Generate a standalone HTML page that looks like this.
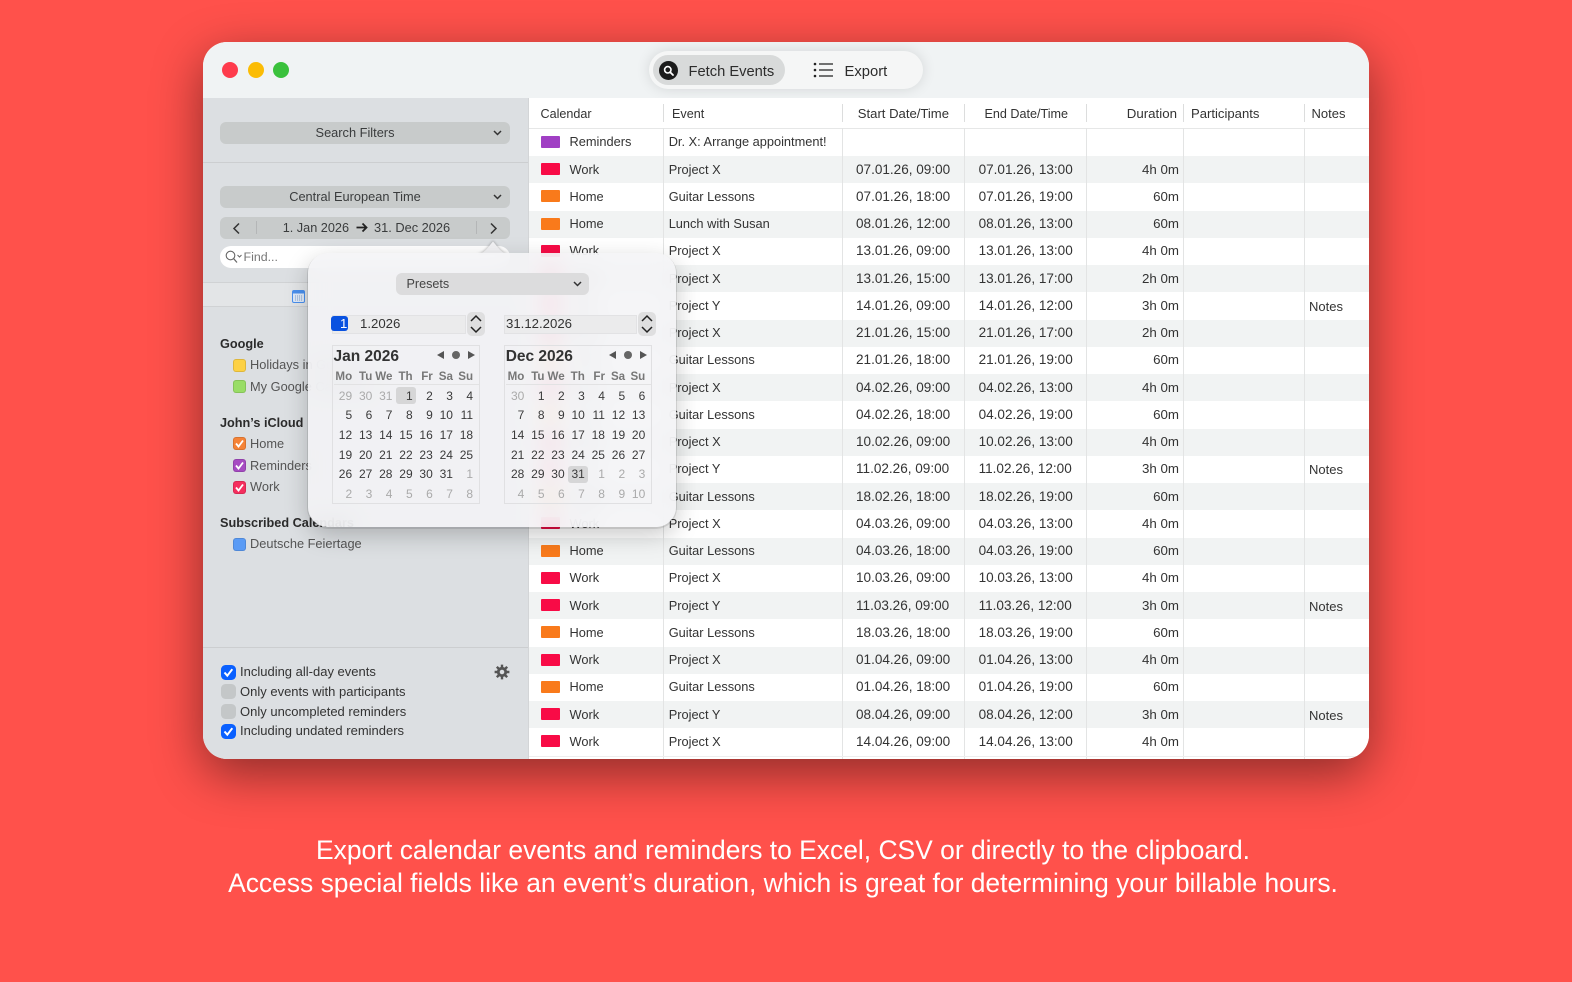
<!DOCTYPE html>
<html><head><meta charset="utf-8"><title>Calendar Export</title>
<style>
*{box-sizing:border-box;margin:0;padding:0}
html,body{width:1572px;height:982px;overflow:hidden;background:#ff514b;font-family:"Liberation Sans",sans-serif;color:#333}
.a,.a>*{position:absolute}
#win{position:absolute;left:203px;top:42px;width:1166px;height:717px;border-radius:24px;box-shadow:0 15px 50px rgba(0,0,0,.45)}
#clip{position:absolute;inset:0;border-radius:24px;overflow:hidden;background:#fff}
#in{position:absolute;left:-203px;top:-42px;width:1572px;height:982px;filter:blur(.25px)}
#in div,#in span,#in svg{position:absolute;white-space:nowrap}
.btn{background:#c8cbcb;border-radius:6px;left:220px;width:290px;height:22px}
.btn .l{left:0;width:100%;text-align:center;font-size:12.8px;line-height:21px;color:#3a3c3d;padding-right:20px}
.chev{width:9px;height:6px}
.sec{left:220px;font-size:12.7px;font-weight:bold;line-height:16px;color:#2b2b2b}
.it{left:250px;font-size:12.8px;line-height:16px;color:#555}
.sw{left:232.500px;width:13px;height:13px;border-radius:3px;border:1px solid rgba(0,0,0,.12)}
.cb{left:220.500px;width:15px;height:15px;border-radius:4.500px;background:#c4c7c8}
.cb.on{background:#0a60ff}
.lab{left:240px;font-size:13px;line-height:16px;color:#333}
.r{left:529px;width:840px;height:27.25px}
.r.g{background:#f1f3f3}
.r span{top:5.5px;font-size:12.8px;line-height:16px;color:#333}
.s{left:12px!important;top:7px!important;width:19px;height:12px;border-radius:1px}
.r .c{left:40.5px}.r .e{left:139.7px}.r .f,.r .n{font-size:13.55px}.r .f{left:327px}.r .n{left:449.6px}.r .d{right:190px;text-align:right;font-size:13.3px}.r .x{left:780px;top:6.500px;font-size:13px}
.P{background:#a03fc4}.W{background:#f80b46}.H{background:#f97a1b}
.vl{top:98px;width:1px;height:662px;background:#e3e4e4}
.h{top:106px;font-size:13.1px;line-height:16px;color:#333}
.hl{top:104px;width:1px;height:18px;background:#dcdddd}
.cal{width:148px;height:159px;border:1px solid #e0e0e2;top:345.3px}
.ct{top:1.500px;left:1px;font-size:15.5px;font-weight:bold;line-height:18px;color:#333}
.g7{display:grid;grid-template-columns:repeat(7,20.17px);position:absolute}
#in .g7 span{position:static;text-align:right;font-size:12px}
.hd{left:-.5px;top:23px;grid-auto-rows:16px;line-height:16px}
#in .hd span{font-weight:bold;font-size:11.6px;color:#777}
.dy{left:-.5px;top:40.3px;grid-auto-rows:19.67px;line-height:19.67px}
#in .dy span{color:#3a3a3a}
#in .dy .o{color:#aaa}
.ar{width:0;height:0;border-style:solid}
.dot{width:8px;height:8px;border-radius:50%;background:#666}
.step{top:312.3px;width:18px;height:24px;background:#dfdfe0;border-radius:5px}
.fld{top:315px;height:19px;background:#ebebec;border:1px solid #e2e2e4;font-size:13.2px;line-height:15.500px;color:#333}
.cap{position:absolute;left:0;width:1566px;text-align:center;color:#fff;font-size:26.43px;line-height:33px;font-family:"Liberation Sans",sans-serif;white-space:nowrap}
</style></head><body>
<div id="win"><div id="clip"><div id="in">
<!-- titlebar -->
<div style="left:203px;top:42px;width:1166px;height:56px;background:#f0f3f4"></div>
<div style="left:222px;top:62px;width:16px;height:16px;border-radius:50%;background:#fe3b4c"></div>
<div style="left:247.500px;top:62px;width:16px;height:16px;border-radius:50%;background:#fbbc05"></div>
<div style="left:272.500px;top:62px;width:16px;height:16px;border-radius:50%;background:#3ac13c"></div>
<div style="left:649.300px;top:50.700px;width:273.400px;height:38.600px;border-radius:19.3px;background:#f5f6f6;box-shadow:0 0 14px rgba(0,0,0,.12)"></div>
<div style="left:653px;top:55px;width:132px;height:30px;border-radius:15px;background:#d8dada"></div>
<div style="left:659px;top:60.500px;width:19px;height:19px;border-radius:50%;background:#1b1b1b"></div>
<svg style="left:659px;top:60.500px" width="19" height="19" viewBox="0 0 19 19"><circle cx="8.800" cy="8.800" r="3.200" fill="none" stroke="#fff" stroke-width="1.600"/><path d="M11.200 11.200L14 14" stroke="#fff" stroke-width="1.800" stroke-linecap="round"/></svg>
<div style="left:688.500px;top:62.500px;font-size:14.700px;line-height:18px;color:#2c2c2c">Fetch Events</div>
<svg style="left:813px;top:61px" width="21" height="18" viewBox="0 0 21 18"><g fill="#222"><circle cx="2" cy="3" r="1.300"/><circle cx="2" cy="9" r="1.300"/><circle cx="2" cy="15" r="1.300"/></g><path d="M6 3H20M6 9H20M6 15H20" stroke="#222" stroke-width="1.300"/></svg>
<div style="left:844.500px;top:62.500px;font-size:14.800px;line-height:18px;color:#2c2c2c">Export</div>

<!-- table -->
<div style="left:529px;top:98px;width:840px;height:662px;background:#fff"></div>
<div style="left:529px;top:127.500px;width:840px;height:1.500px;background:#e6e7e7"></div>
<div class="h" style="left:540.500px;font-size:12.600px">Calendar</div>
<div class="h" style="left:672px;font-size:12.600px">Event</div>
<div class="h" style="right:623px">Start Date/Time</div>
<div class="h" style="right:504px;font-size:12.600px">End Date/Time</div>
<div class="h" style="right:395px;font-size:13.300px">Duration</div>
<div class="h" style="left:1191px">Participants</div>
<div class="h" style="left:1311.500px;font-size:13px">Notes</div>

<div class="a" style="left:0;top:128.750px;width:0;height:0">
<div class="r" style="top:0px"><span class="s P"></span><span class="c">Reminders</span><span class="e">Dr. X: Arrange appointment!</span></div>
<div class="r g" style="top:27.250px"><span class="s W"></span><span class="c">Work</span><span class="e">Project X</span><span class="f">07.01.26, 09:00</span><span class="n">07.01.26, 13:00</span><span class="d">4h 0m</span></div>
<div class="r" style="top:54.500px"><span class="s H"></span><span class="c">Home</span><span class="e">Guitar Lessons</span><span class="f">07.01.26, 18:00</span><span class="n">07.01.26, 19:00</span><span class="d">60m</span></div>
<div class="r g" style="top:81.750px"><span class="s H"></span><span class="c">Home</span><span class="e">Lunch with Susan</span><span class="f">08.01.26, 12:00</span><span class="n">08.01.26, 13:00</span><span class="d">60m</span></div>
<div class="r" style="top:109px"><span class="s W"></span><span class="c">Work</span><span class="e">Project X</span><span class="f">13.01.26, 09:00</span><span class="n">13.01.26, 13:00</span><span class="d">4h 0m</span></div>
<div class="r g" style="top:136.250px"><span class="s W"></span><span class="c">Work</span><span class="e">Project X</span><span class="f">13.01.26, 15:00</span><span class="n">13.01.26, 17:00</span><span class="d">2h 0m</span></div>
<div class="r" style="top:163.500px"><span class="s W"></span><span class="c">Work</span><span class="e">Project Y</span><span class="f">14.01.26, 09:00</span><span class="n">14.01.26, 12:00</span><span class="d">3h 0m</span><span class="x">Notes</span></div>
<div class="r g" style="top:190.750px"><span class="s W"></span><span class="c">Work</span><span class="e">Project X</span><span class="f">21.01.26, 15:00</span><span class="n">21.01.26, 17:00</span><span class="d">2h 0m</span></div>
<div class="r" style="top:218px"><span class="s H"></span><span class="c">Home</span><span class="e">Guitar Lessons</span><span class="f">21.01.26, 18:00</span><span class="n">21.01.26, 19:00</span><span class="d">60m</span></div>
<div class="r g" style="top:245.250px"><span class="s W"></span><span class="c">Work</span><span class="e">Project X</span><span class="f">04.02.26, 09:00</span><span class="n">04.02.26, 13:00</span><span class="d">4h 0m</span></div>
<div class="r" style="top:272.500px"><span class="s H"></span><span class="c">Home</span><span class="e">Guitar Lessons</span><span class="f">04.02.26, 18:00</span><span class="n">04.02.26, 19:00</span><span class="d">60m</span></div>
<div class="r g" style="top:299.750px"><span class="s W"></span><span class="c">Work</span><span class="e">Project X</span><span class="f">10.02.26, 09:00</span><span class="n">10.02.26, 13:00</span><span class="d">4h 0m</span></div>
<div class="r" style="top:327px"><span class="s W"></span><span class="c">Work</span><span class="e">Project Y</span><span class="f">11.02.26, 09:00</span><span class="n">11.02.26, 12:00</span><span class="d">3h 0m</span><span class="x">Notes</span></div>
<div class="r g" style="top:354.250px"><span class="s H"></span><span class="c">Home</span><span class="e">Guitar Lessons</span><span class="f">18.02.26, 18:00</span><span class="n">18.02.26, 19:00</span><span class="d">60m</span></div>
<div class="r" style="top:381.500px"><span class="s W"></span><span class="c">Work</span><span class="e">Project X</span><span class="f">04.03.26, 09:00</span><span class="n">04.03.26, 13:00</span><span class="d">4h 0m</span></div>
<div class="r g" style="top:408.750px"><span class="s H"></span><span class="c">Home</span><span class="e">Guitar Lessons</span><span class="f">04.03.26, 18:00</span><span class="n">04.03.26, 19:00</span><span class="d">60m</span></div>
<div class="r" style="top:436px"><span class="s W"></span><span class="c">Work</span><span class="e">Project X</span><span class="f">10.03.26, 09:00</span><span class="n">10.03.26, 13:00</span><span class="d">4h 0m</span></div>
<div class="r g" style="top:463.250px"><span class="s W"></span><span class="c">Work</span><span class="e">Project Y</span><span class="f">11.03.26, 09:00</span><span class="n">11.03.26, 12:00</span><span class="d">3h 0m</span><span class="x">Notes</span></div>
<div class="r" style="top:490.500px"><span class="s H"></span><span class="c">Home</span><span class="e">Guitar Lessons</span><span class="f">18.03.26, 18:00</span><span class="n">18.03.26, 19:00</span><span class="d">60m</span></div>
<div class="r g" style="top:517.750px"><span class="s W"></span><span class="c">Work</span><span class="e">Project X</span><span class="f">01.04.26, 09:00</span><span class="n">01.04.26, 13:00</span><span class="d">4h 0m</span></div>
<div class="r" style="top:545px"><span class="s H"></span><span class="c">Home</span><span class="e">Guitar Lessons</span><span class="f">01.04.26, 18:00</span><span class="n">01.04.26, 19:00</span><span class="d">60m</span></div>
<div class="r g" style="top:572.250px"><span class="s W"></span><span class="c">Work</span><span class="e">Project Y</span><span class="f">08.04.26, 09:00</span><span class="n">08.04.26, 12:00</span><span class="d">3h 0m</span><span class="x">Notes</span></div>
<div class="r" style="top:599.500px"><span class="s W"></span><span class="c">Work</span><span class="e">Project X</span><span class="f">14.04.26, 09:00</span><span class="n">14.04.26, 13:00</span><span class="d">4h 0m</span></div>
</div>
<div class="vl" style="left:663px;top:128px"></div><div class="vl" style="left:842px;top:128px"></div><div class="vl" style="left:964px;top:128px"></div><div class="vl" style="left:1086px;top:128px"></div><div class="vl" style="left:1183px;top:128px"></div><div class="vl" style="left:1304px;top:128px"></div>
<div class="hl" style="left:663px"></div><div class="hl" style="left:842px"></div><div class="hl" style="left:964px"></div><div class="hl" style="left:1086px"></div><div class="hl" style="left:1183px"></div><div class="hl" style="left:1304px"></div>
<div style="left:529px;top:756px;width:840px;height:1px;background:#eee"></div>

<!-- sidebar -->
<div style="left:203px;top:98px;width:326px;height:662px;background:#dcdfe2;border-right:1.500px solid #d3d5d7"></div>
<div class="btn" style="top:122px"><span class="l">Search Filters</span><svg class="chev" style="left:273px;top:8px" viewBox="0 0 9 6"><path d="M1 1l3.500 3.500L8 1" fill="none" stroke="#333" stroke-width="1.500"/></svg></div>
<div style="left:203px;top:161.500px;width:325px;height:1.500px;background:#ccced0"></div>
<div class="btn" style="top:186px"><span class="l">Central European Time</span><svg class="chev" style="left:273px;top:8px" viewBox="0 0 9 6"><path d="M1 1l3.500 3.500L8 1" fill="none" stroke="#333" stroke-width="1.500"/></svg></div>
<div class="btn" style="top:216.700px;background:#c8cbcb">
<span style="left:62.700px;top:0;font-size:12.700px;line-height:22px;color:#3a3c3d">1. Jan 2026</span>
<span style="left:154px;top:0;font-size:12.800px;line-height:22px;color:#3a3c3d">31. Dec 2026</span>
<svg style="left:12px;top:5px" width="9" height="13" viewBox="0 0 9 13"><path d="M7 1.500L2 6.500l5 5" fill="none" stroke="#333" stroke-width="1.500"/></svg>
<svg style="left:269px;top:5px" width="9" height="13" viewBox="0 0 9 13"><path d="M2 1.500l5 5-5 5" fill="none" stroke="#333" stroke-width="1.500"/></svg>
<div style="left:36px;top:4px;width:1px;height:13px;background:#b4b6b7"></div><div style="left:256px;top:4px;width:1px;height:13px;background:#b4b6b7"></div>
<svg style="left:136px;top:5px" width="12" height="11" viewBox="0 0 12 11"><path d="M0.500 5.500H10M6.500 1.500l4 4-4 4" fill="none" stroke="#222" stroke-width="1.800"/></svg></div>
<div style="left:220px;top:246px;width:290px;height:22px;border-radius:11px;background:#fff"></div>
<svg style="left:225px;top:250px" width="17" height="14" viewBox="0 0 17 14"><circle cx="5.500" cy="5.500" r="4.300" fill="none" stroke="#666" stroke-width="1.100"/><path d="M8.700 8.700L12 12.500" stroke="#666" stroke-width="1.200"/><path d="M12.500 5l2 2 2-2" fill="none" stroke="#666" stroke-width="1"/></svg>
<div style="left:243.500px;top:249px;font-size:12.400px;line-height:16px;color:#777">Find...</div>
<div style="left:203px;top:282px;width:325px;height:25px;background:#e3e5e7;border-top:1.500px solid #d0d2d4;border-bottom:1.500px solid #d0d2d4"></div>
<svg style="left:291.500px;top:290px" width="13" height="13" viewBox="0 0 13 13"><rect x=".5" y=".5" width="12" height="12" rx="1.500" fill="#dfeafa" stroke="#4a90ee"/><rect x=".5" y=".5" width="12" height="3" fill="#4a90ee"/><path d="M3 6h7M3 8h7M3 10h7" stroke="#7ea0c8" stroke-dasharray="1 1"/></svg>

<div class="sec" style="top:336px">Google</div>
<div class="sw" style="top:358.500px;background:#fdd144"></div><div class="it" style="top:357px">Holidays in Germany</div>
<div class="sw" style="top:380px;background:#99dd66"></div><div class="it" style="top:379px">My Google Calendar</div>
<div class="sec" style="top:414.500px">John’s iCloud</div>
<div class="sw" style="top:437px;background:#f58337"></div><div class="it" style="top:435.500px">Home</div>
<div class="sw" style="top:459px;background:#a64bc2"></div><div class="it" style="top:457.500px">Reminders</div>
<div class="sw" style="top:480.500px;background:#f52e5e"></div><div class="it" style="top:479px">Work</div>
<svg style="left:232.500px;top:437px" width="13" height="13" viewBox="0 0 13 13"><path d="M3 6.500l2.500 3L10 3.500" fill="none" stroke="#fff" stroke-width="1.800"/></svg>
<svg style="left:232.500px;top:459px" width="13" height="13" viewBox="0 0 13 13"><path d="M3 6.500l2.500 3L10 3.500" fill="none" stroke="#fff" stroke-width="1.800"/></svg>
<svg style="left:232.500px;top:480.500px" width="13" height="13" viewBox="0 0 13 13"><path d="M3 6.500l2.500 3L10 3.500" fill="none" stroke="#fff" stroke-width="1.800"/></svg>
<div class="sec" style="top:515px">Subscribed Calendars</div>
<div class="sw" style="top:537.500px;background:#5a9bf5"></div><div class="it" style="top:536px">Deutsche Feiertage</div>

<div style="left:203px;top:646.500px;width:325px;height:1.500px;background:#ccced0"></div>
<div class="cb on" style="top:664.500px"></div><div class="lab" style="top:664px">Including all-day events</div>
<div class="cb" style="top:684px"></div><div class="lab" style="top:684px">Only events with participants</div>
<div class="cb" style="top:704px"></div><div class="lab" style="top:704px">Only uncompleted reminders</div>
<div class="cb on" style="top:723.500px"></div><div class="lab" style="top:723px">Including undated reminders</div>
<svg style="left:220.500px;top:664.500px" width="15" height="15" viewBox="0 0 15 15"><path d="M3.500 7.500l2.800 3.200 5-6.500" fill="none" stroke="#fff" stroke-width="2"/></svg>
<svg style="left:220.500px;top:723.500px" width="15" height="15" viewBox="0 0 15 15"><path d="M3.500 7.500l2.800 3.200 5-6.500" fill="none" stroke="#fff" stroke-width="2"/></svg>
<svg style="left:494px;top:664px" width="16" height="16" viewBox="0 0 16 16"><circle cx="8" cy="8" r="3.700" fill="none" stroke="#555" stroke-width="2.800"/><path d="M8 .6v3M8 12.400v3M.6 8h3M12.400 8h3M2.800 2.800l2.100 2.100M11.100 11.100l2.100 2.100M13.200 2.800l-2.100 2.100M4.900 11.100l-2.100 2.100" stroke="#555" stroke-width="2.400"/></svg>

<!-- popover -->
<svg style="left:476px;top:240px;z-index:1;filter:drop-shadow(0 -1px 1px rgba(0,0,0,.22))" width="34" height="15" viewBox="0 0 34 15"><path d="M0 14.500C8 14.500 12 7 17 1.500 22 7 26 14.500 34 14.500z" fill="#f2f2f4"/></svg>
<div style="left:308.300px;top:253.300px;width:368px;height:273.500px;border-radius:20px;background:rgba(244,244,246,.87);backdrop-filter:blur(10px);box-shadow:0 1px 0 1px rgba(0,0,0,.1),0 8px 24px rgba(0,0,0,.22);z-index:2"></div>
<div style="left:0;top:0;z-index:4;width:0;height:0">
<div style="left:395.700px;top:273px;width:193.600px;height:21.700px;border-radius:6px;background:#dcdcdd"></div>
<div style="left:406.500px;top:276px;font-size:12.600px;line-height:16px;color:#444">Presets</div>
<svg class="chev" style="left:572.500px;top:281px" viewBox="0 0 9 6"><path d="M1 1l3.500 3.500L8 1" fill="none" stroke="#333" stroke-width="1.500"/></svg>

<div class="fld" style="left:331.500px;width:134px"></div>
<div style="left:331px;top:315.500px;width:17.300px;height:15.500px;border-radius:3px;background:#0a52e0"></div>
<div style="left:340px;top:316px;font-size:13.200px;line-height:16px;color:#fff">1</div>
<div style="left:360px;top:316px;font-size:13.200px;line-height:16px;color:#333">1.2026</div>
<div class="step" style="left:466.700px"></div>
<svg style="left:466.700px;top:312.300px" width="18" height="24" viewBox="0 0 18 24"><path d="M4 9l5-5 5 5M4 15l5 5 5-5" fill="none" stroke="#222" stroke-width="1.500"/></svg>
<div class="fld" style="left:503.500px;width:133px;padding-left:1.500px">31.12.2026</div>
<div class="step" style="left:638px"></div>
<svg style="left:638px;top:312.300px" width="18" height="24" viewBox="0 0 18 24"><path d="M4 9l5-5 5 5M4 15l5 5 5-5" fill="none" stroke="#222" stroke-width="1.500"/></svg>

<div class="cal" style="left:331.500px">
<div style="left:63.500px;top:40.500px;width:20px;height:17px;border-radius:3px;background:#d6d6d7"></div>
<div style="left:1px;top:38px;width:145px;height:1px;background:#e2e2e3"></div>
<div class="ct">Jan 2026</div>
<div class="ar" style="left:104px;top:5px;border-width:4px 7px 4px 0;border-color:transparent #555 transparent transparent"></div>
<div class="dot" style="left:119px;top:5px"></div>
<div class="ar" style="left:135.500px;top:5px;border-width:4px 0 4px 7px;border-color:transparent transparent transparent #555"></div>
<div class="g7 hd"><span>Mo</span><span>Tu</span><span>We</span><span>Th</span><span>Fr</span><span>Sa</span><span>Su</span></div>
<div class="g7 dy"><span class="o">29</span><span class="o">30</span><span class="o">31</span><span>1</span><span>2</span><span>3</span><span>4</span><span>5</span><span>6</span><span>7</span><span>8</span><span>9</span><span>10</span><span>11</span><span>12</span><span>13</span><span>14</span><span>15</span><span>16</span><span>17</span><span>18</span><span>19</span><span>20</span><span>21</span><span>22</span><span>23</span><span>24</span><span>25</span><span>26</span><span>27</span><span>28</span><span>29</span><span>30</span><span>31</span><span class="o">1</span><span class="o">2</span><span class="o">3</span><span class="o">4</span><span class="o">5</span><span class="o">6</span><span class="o">7</span><span class="o">8</span></div>
</div>
<div class="cal" style="left:503.700px">
<div style="left:63.500px;top:119.500px;width:20px;height:17px;border-radius:3px;background:#d6d6d7"></div>
<div style="left:1px;top:38px;width:145px;height:1px;background:#e2e2e3"></div>
<div class="ct">Dec 2026</div>
<div class="ar" style="left:104px;top:5px;border-width:4px 7px 4px 0;border-color:transparent #555 transparent transparent"></div>
<div class="dot" style="left:119px;top:5px"></div>
<div class="ar" style="left:135.500px;top:5px;border-width:4px 0 4px 7px;border-color:transparent transparent transparent #555"></div>
<div class="g7 hd"><span>Mo</span><span>Tu</span><span>We</span><span>Th</span><span>Fr</span><span>Sa</span><span>Su</span></div>
<div class="g7 dy"><span class="o">30</span><span>1</span><span>2</span><span>3</span><span>4</span><span>5</span><span>6</span><span>7</span><span>8</span><span>9</span><span>10</span><span>11</span><span>12</span><span>13</span><span>14</span><span>15</span><span>16</span><span>17</span><span>18</span><span>19</span><span>20</span><span>21</span><span>22</span><span>23</span><span>24</span><span>25</span><span>26</span><span>27</span><span>28</span><span>29</span><span>30</span><span>31</span><span class="o">1</span><span class="o">2</span><span class="o">3</span><span class="o">4</span><span class="o">5</span><span class="o">6</span><span class="o">7</span><span class="o">8</span><span class="o">9</span><span class="o">10</span></div>
</div>
</div>
</div></div></div>
<div class="cap" style="top:833.500px">Export calendar events and reminders to Excel, CSV or directly to the clipboard.</div>
<div class="cap" style="top:866.500px">Access special fields like an event’s duration, which is great for determining your billable hours.</div>
</body></html>
